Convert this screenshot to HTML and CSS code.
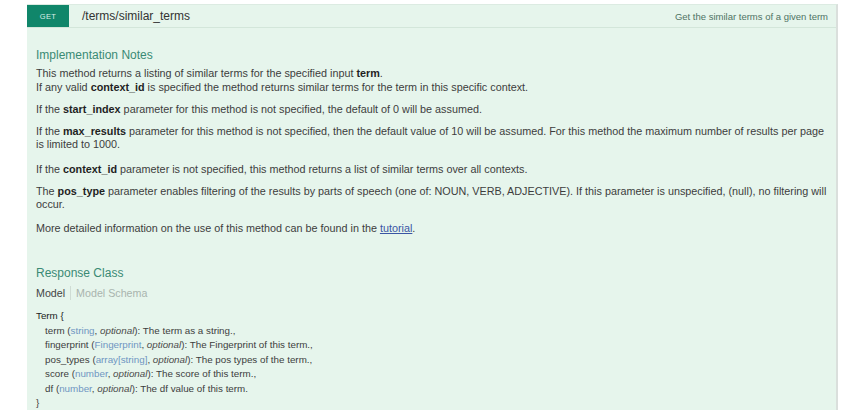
FILE: index.html
```html
<!DOCTYPE html>
<html>
<head>
<meta charset="utf-8">
<link rel="stylesheet" href="styles.css">
</head>
<body>
<div class="op">
  <div class="op-head">
    <span class="verb">GET</span>
    <span class="path">/terms/similar_terms</span>
    <span class="summary">Get the similar terms of a given term</span>
  </div>
  <div class="op-body">
    <h4 class="sec-title">Implementation Notes</h4>
    <p class="first">This method returns a listing of similar terms for the specified input <b>term</b>.<br>If any valid <b>context_id</b> is specified the method returns similar terms for the term in this specific context.</p>
    <p>If the <b>start_index</b> parameter for this method is not specified, the default of 0 will be assumed.</p>
    <p class="gap">If the <b>max_results</b> parameter for this method is not specified, then the default value of 10 will be assumed. For this method the maximum number of results per page is limited to 1000.</p>
    <p>If the <b>context_id</b> parameter is not specified, this method returns a list of similar terms over all contexts.</p>
    <p class="gap2">The <b>pos_type</b> parameter enables filtering of the results by parts of speech (one of: NOUN, VERB, ADJECTIVE). If this parameter is unspecified, (null), no filtering will occur.</p>
    <p>More detailed information on the use of this method can be found in the <a href="#">tutorial</a>.</p>
    <h4 class="sec-title resp">Response Class</h4>
    <div class="tabs"><span class="tab active">Model</span><span class="tab">Model Schema</span></div>
    <div class="model">
      <div class="m-name">Term {</div>
      <div class="m-prop">term (<span class="type">string</span>, <i>optional</i>): The term as a string.,</div>
      <div class="m-prop">fingerprint (<span class="type">Fingerprint</span>, <i>optional</i>): The Fingerprint of this term.,</div>
      <div class="m-prop">pos_types (<span class="type">array[string]</span>, <i>optional</i>): The pos types of the term.,</div>
      <div class="m-prop">score (<span class="type">number</span>, <i>optional</i>): The score of this term.,</div>
      <div class="m-prop">df (<span class="type">number</span>, <i>optional</i>): The df value of this term.</div>
      <div class="m-end">}</div>
    </div>
  </div>
</div>
</body>
</html>
```

FILE: styles.css
```css
html, body {
  margin: 0;
  padding: 0;
  background: #ffffff;
}
body {
  font-family: "Liberation Sans", Arial, sans-serif;
  color: #3d3d3d;
  padding: 4px 12px 0 27px;
}
.op {
  width: 809px;
  background: #e6f5ec;
  border-top: 1px solid #dcebe2;
  border-right: 2px solid #dadfdc;
}
.op-head {
  display: flex;
  align-items: center;
  height: 22px;
  border-bottom: 1px solid #d3e6da;
}
.verb {
  width: 42px;
  height: 22px;
  background: #10866a;
  color: #d9efe7;
  font-size: 7.5px;
  display: flex;
  align-items: center;
  justify-content: center;
  letter-spacing: 0.3px;
}
.path {
  margin-left: 13px;
  font-size: 12px;
  color: #333;
  flex: 1;
}
.summary {
  font-size: 9.5px;
  color: #4f7364;
  margin-right: 8px;
}
.op-body {
  padding: 20px 9px 6px 9px;
  font-size: 10.8px;
  line-height: 13.5px;
}
.sec-title {
  margin: 0 0 5px 0;
  font-weight: normal;
  font-size: 12px;
  line-height: 14px;
  color: #3a8a74;
}
.sec-title.resp {
  margin-top: 31px;
  margin-bottom: 6px;
}
p {
  margin: 0 0 8.5px 0;
}
p.gap {
  margin-bottom: 11px;
}
p.gap2 {
  margin-bottom: 10px;
}
b {
  color: #1f1f1f;
}
a {
  color: #3a55a4;
}
.tabs {
  display: flex;
  align-items: center;
  font-size: 10.7px;
  line-height: 14px;
}
.tab {
  color: #a9b4ae;
}
.tab.active {
  color: #444;
  padding-right: 5px;
  margin-right: 5px;
  border-right: 1px solid #cfdcd4;
}
.model {
  margin-top: 9px;
  font-size: 9.8px;
  line-height: 14.5px;
}
.m-name {
  color: #222;
}
.m-prop {
  padding-left: 9px;
}
.type {
  color: #6f95c2;
}
i {
  color: #4a4a4a;
}
```
